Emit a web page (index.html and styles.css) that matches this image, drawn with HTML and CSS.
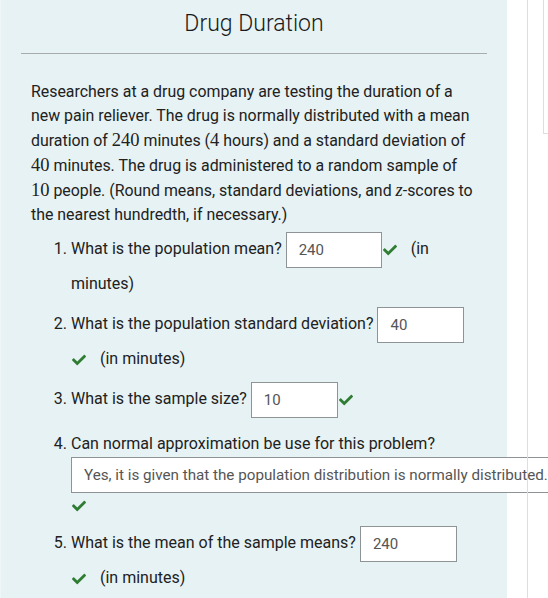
FILE: index.html
```html
<!DOCTYPE html>
<html>
<head>
<meta charset="utf-8">
<link rel="stylesheet" href="styles.css">
</head>
<body>
<div class="page">
  <main class="panel">
    <h1 class="title">Drug Duration</h1>
    <hr class="rule">
    <p class="intro">Researchers at a drug company are testing the duration of a<br>new pain reliever. The drug is normally distributed with a mean<br>duration of <span class="m">240</span> minutes (<span class="m">4</span> hours) and a standard deviation of<br><span class="m">40</span> minutes. The drug is administered to a random sample of<br><span class="m">10</span> people. (Round means, standard deviations, and <span class="m mi">z</span>-scores to<br>the nearest hundredth, if necessary.)</p>
    <ol class="questions">
      <li>What is the population mean? <span class="field w95">240</span><svg class="ok" viewBox="0 0 512 512"><path d="M173.9 439.4l-166.4-166.4c-10-10-10-26.2 0-36.2l36.2-36.2c10-10 26.2-10 36.2 0L192 312.7 432.1 72.6c10-10 26.2-10 36.2 0l36.2 36.2c10 10 10 26.2 0 36.2l-294.4 294.4c-10 10-26.2 10-36.2 0z"/></svg><span class="unit">(in minutes)</span></li>
      <li>What is the population standard deviation? <span class="field w86">40</span><br><svg class="ok" viewBox="0 0 512 512"><path d="M173.9 439.4l-166.4-166.4c-10-10-10-26.2 0-36.2l36.2-36.2c10-10 26.2-10 36.2 0L192 312.7 432.1 72.6c10-10 26.2-10 36.2 0l36.2 36.2c10 10 10 26.2 0 36.2l-294.4 294.4c-10 10-26.2 10-36.2 0z"/></svg><span class="unit">(in minutes)</span></li>
      <li>What is the sample size? <span class="field w86">10</span><svg class="ok" viewBox="0 0 512 512"><path d="M173.9 439.4l-166.4-166.4c-10-10-10-26.2 0-36.2l36.2-36.2c10-10 26.2-10 36.2 0L192 312.7 432.1 72.6c10-10 26.2-10 36.2 0l36.2 36.2c10 10 10 26.2 0 36.2l-294.4 294.4c-10 10-26.2 10-36.2 0z"/></svg></li>
      <li class="q4">Can normal approximation be use for this problem?
        <span class="field wide">Yes, it is given that the population distribution is normally distributed.</span>
        <svg class="ok" viewBox="0 0 512 512"><path d="M173.9 439.4l-166.4-166.4c-10-10-10-26.2 0-36.2l36.2-36.2c10-10 26.2-10 36.2 0L192 312.7 432.1 72.6c10-10 26.2-10 36.2 0l36.2 36.2c10 10 10 26.2 0 36.2l-294.4 294.4c-10 10-26.2 10-36.2 0z"/></svg></li>
      <li>What is the mean of the sample means? <span class="field w96">240</span><br><svg class="ok" viewBox="0 0 512 512"><path d="M173.9 439.4l-166.4-166.4c-10-10-10-26.2 0-36.2l36.2-36.2c10-10 26.2-10 36.2 0L192 312.7 432.1 72.6c10-10 26.2-10 36.2 0l36.2 36.2c10 10 10 26.2 0 36.2l-294.4 294.4c-10 10-26.2 10-36.2 0z"/></svg><span class="unit">(in minutes)</span></li>
    </ol>
  </main>
  <aside class="side">
    <div class="side-card"></div>
  </aside>
</div>
</body>
</html>
```
FILE: styles.css
```css
html, body {
  margin: 0;
  padding: 0;
  overflow: hidden;
  background: #fff;
}
body {
  font-family: Roboto, "Liberation Sans", sans-serif;
  color: #212121;
}
.page {
  display: flex;
  min-height: 598px;
}
.panel {
  width: 506px;
  flex: none;
  background: #e6f2f4;
  border-left: 1px solid #eef6f7;
  min-height: 598px;
}
.title {
  margin: 10px 0 0;
  text-align: center;
  font-weight: 300;
  font-size: 23px;
  line-height: 27px;
  color: #1a1a1a;
}
.rule {
  margin: 16px 20px 0 20px;
  border: 0;
  border-top: 1px solid #a9acad;
  height: 0;
}
.intro {
  margin: 26px 10px 0 30px;
  font-size: 15.9px;
  line-height: 24px;
  white-space: nowrap;
}
.m {
  font-family: "Liberation Serif", "DejaVu Serif", serif;
  font-size: 18.5px;
}
.mi {
  font-style: italic;
}
.questions {
  margin: 1px 0 0 0;
  padding: 0 0 0 70px;
  font-size: 16px;
  line-height: 24px;
}
.questions li {
  margin-bottom: 7px;
  padding-right: 20px;
}
.field {
  display: inline-block;
  box-sizing: border-box;
  height: 36px;
  line-height: 34px;
  padding: 0 12px;
  margin: 4px 0;
  border: 1px solid #8e9396;
  background: #fff;
  color: #555;
  font-size: 15px;
  vertical-align: middle;
}
.w95 { width: 96px; }
.w86 { width: 87px; }
.w96 { width: 97px; }
.q4 .field {
  display: block;
  width: 490px;
  margin: 1px 0 0 0;
  white-space: nowrap;
  font-size: 15.2px;
}
.questions .q4 {
  margin-top: 10px;
  margin-bottom: 5px;
}
.ok {
  display: inline-block;
  width: 14px;
  height: 14px;
  fill: #2f7d32;
  vertical-align: middle;
  margin: 0 2px 0 1px;
}
.unit {
  margin-left: 12px;
}
.side {
  flex: 1;
  margin-left: 20px;
  border-left: 1px solid #dedede;
  padding-left: 15px;
}
.side-card {
  height: 133px;
  border-left: 1px solid #dedede;
  border-bottom: 1px solid #dedede;
}
```
